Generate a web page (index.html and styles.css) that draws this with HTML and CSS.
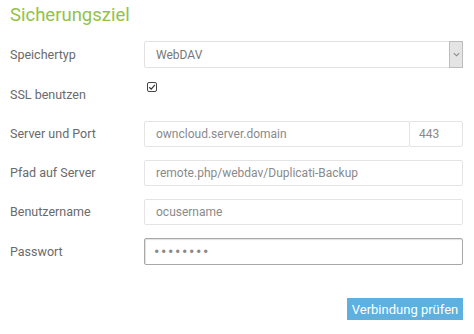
FILE: index.html
```html
<!doctype html>
<html lang="de">
<head>
    <meta charset="UTF-8">
    <meta name="viewport" content="width=device-width, initial-scale=1.0">
    <title>Sicherungsziel</title>
    <link rel="stylesheet" href="styles.css">
</head>
<body>
    <div id="wrapper">
        <h2 class="title">Sicherungsziel</h2>
        <form id="targetForm">

            <div class="form-row row-select">
                <label for="storage_type">Speichertyp</label>
                <div class="select-box">
                    <select id="storage_type" name="storage_type">
                        <option>WebDAV</option>
                    </select>
                    <span class="select-arrow">
                        <svg width="7" height="5" viewBox="0 0 7 5"><path d="M0.8 1.2 L3.5 3.8 L6.2 1.2" fill="none" stroke="#888" stroke-width="1.1"/></svg>
                    </span>
                </div>
            </div>

            <div class="form-row row-check">
                <label for="use_ssl">SSL benutzen</label>
                <span class="check-box" id="use_ssl">
                    <svg width="10" height="10" viewBox="0 0 10 10"><rect x="0.5" y="0.5" width="9" height="9" rx="1.5" fill="#fff" stroke="#444"/><path d="M2.2 5.2 L4.2 7.1 L7.9 2.9" fill="none" stroke="#333" stroke-width="1.2"/></svg>
                </span>
            </div>

            <div class="form-row">
                <label for="server">Server und Port</label>
                <div class="input-pair">
                    <input type="text" id="server" class="field" placeholder="owncloud.server.domain">
                    <input type="text" id="port" class="field port" placeholder="443">
                </div>
            </div>

            <div class="form-row">
                <label for="path">Pfad auf Server</label>
                <input type="text" id="path" class="field" placeholder="remote.php/webdav/Duplicati-Backup">
            </div>

            <div class="form-row">
                <label for="username">Benutzername</label>
                <input type="text" id="username" class="field" placeholder="ocusername">
            </div>

            <div class="form-row">
                <label for="password">Passwort</label>
                <input type="password" id="password" class="field active" value="geheim12">
            </div>

            <div class="actions">
                <button type="button" id="test_button">Verbindung prüfen</button>
            </div>
        </form>
    </div>
</body>
</html>
```

FILE: styles.css
```css
body {
    font-family: Roboto, "Open Sans", sans-serif;
    margin: 0;
    padding: 0;
    background: #fff;
    color: #666;
}

#wrapper {
    padding: 0 11px 0 10px;
}

.title {
    margin: 0;
    padding-top: 4px;
    height: 37px;
    font-size: 18.5px;
    font-weight: 400;
    color: #92c248;
    line-height: 22px;
}

form {
    display: flex;
    flex-direction: column;
    gap: 13px;
}

.form-row {
    display: grid;
    grid-template-columns: 134px 1fr;
    align-items: center;
    height: 26px;
}

.row-select {
    height: 27px;
}

.row-check {
    margin-top: 1px;
    align-items: start;
}

label {
    font-size: 12.5px;
    color: #6a6a6a;
    line-height: 26px;
}

.select-box {
    display: flex;
    height: 27px;
    box-sizing: border-box;
    border: 1px solid #e2e2e2;
    border-radius: 2px;
    background: #fff;
}

.select-box select {
    flex: 1;
    appearance: none;
    -webkit-appearance: none;
    border: none;
    outline: none;
    background: transparent;
    padding: 0 11px;
    font-family: inherit;
    font-size: 12px;
    color: #777;
}

.select-arrow {
    width: 12px;
    display: flex;
    align-items: center;
    justify-content: center;
    background: #e4e4e4;
    border: 1px solid #bdbdbd;
    margin: -1px -1px -1px 0;
}

.check-box {
    display: block;
    width: 10px;
    height: 10px;
    margin-left: 3px;
}

.check-box svg {
    display: block;
}

.input-pair {
    display: flex;
}

.field {
    width: 100%;
    height: 26px;
    box-sizing: border-box;
    padding: 0 11px;
    font-family: inherit;
    font-size: 12px;
    color: #777;
    border: 1px solid #e4e4e4;
    border-radius: 2px;
    outline: none;
}

.field::placeholder {
    color: #8a8a8a;
}

.port {
    width: 54px;
    flex: none;
    padding: 0 9px;
    margin-left: -1px;
}

.active {
    height: 27px;
    padding: 0 9px;
    border: 1px solid #a8a8a8;
    box-shadow: inset 1px 1px 1px rgba(0, 0, 0, 0.12);
    color: #888;
    font-size: 16px;
    letter-spacing: 1.6px;
}

.actions {
    display: flex;
    justify-content: flex-end;
    margin-top: 21px;
}

#test_button {
    width: 116px;
    height: 22px;
    padding: 0;
    font-family: inherit;
    font-size: 13px;
    color: #fff;
    background: #5eb0df;
    border: none;
    cursor: pointer;
}
```
